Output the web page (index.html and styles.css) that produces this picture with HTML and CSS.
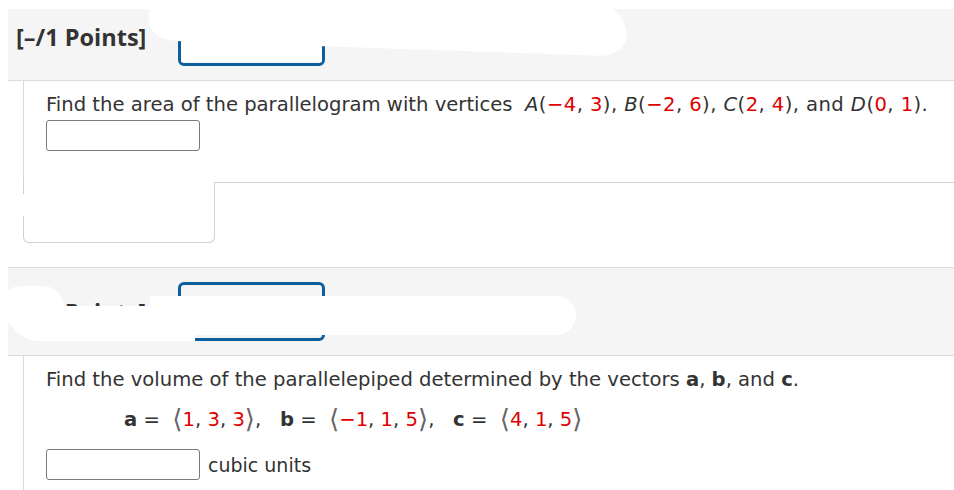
FILE: index.html
```html
<!DOCTYPE html>
<html>
<head>
<meta charset="utf-8">
<link rel="stylesheet" href="styles.css">
</head>
<body>
<div class="page">
  <div class="clip">
    <div class="q-head first">
      <span class="points">[–/1 Points]</span>
      <span class="btn"></span>
    </div>
  </div>
  <div class="q-body">
    <p class="q-text">Find the area of the parallelogram with vertices&nbsp; <span class="math"><i>A</i>(<span class="r">−4</span>, <span class="r">3</span>), <i>B</i>(<span class="r">−2</span>, <span class="r">6</span>), <i>C</i>(<span class="r">2</span>, <span class="r">4</span>), and <i>D</i>(<span class="r">0</span>, <span class="r">1</span>).</span></p>
    <div class="answer"><span class="field"></span></div>
  </div>
  <div class="tab-row">
    <div class="tab"></div>
    <div class="tab-line"></div>
  </div>
  <div class="q-head second">
    <span class="points">[–/1 Points]</span>
    <span class="btn"></span>
  </div>
  <div class="q-body second-body">
    <p class="q-text">Find the volume of the parallelepiped determined by the vectors <b>a</b>, <b>b</b>, and <b>c</b>.</p>
    <p class="vectors"><b>a</b> = &nbsp;<span class="ang">⟨</span><span class="r">1</span>, <span class="r">3</span>, <span class="r">3</span><span class="ang">⟩</span>, &nbsp; <b>b</b> = &nbsp;<span class="ang">⟨</span><span class="r">−1</span>, <span class="r">1</span>, <span class="r">5</span><span class="ang">⟩</span>, &nbsp; <b>c</b> = &nbsp;<span class="ang">⟨</span><span class="r">4</span>, <span class="r">1</span>, <span class="r">5</span><span class="ang">⟩</span></p>
    <div class="answer"><span class="field"></span><span class="unit">cubic units</span></div>
  </div>
  <span class="blob b1"></span>
  <span class="blob b2"></span>
  <span class="blob b3"></span>
  <span class="blob b4"></span>
  <span class="blob b5"></span>
  <span class="blob b6"></span>
</div>
</body>
</html>
```
FILE: styles.css
```css
html, body { margin: 0; padding: 0; background: #fff; }
body { padding: 9px 0 0 8px; overflow: hidden; }
.page { position: relative; font-family: "DejaVu Sans", Verdana, sans-serif; color: #333; }

.clip { height: 72px; overflow: hidden; }
.q-head {
  display: flex; align-items: center;
  height: 89px; box-sizing: border-box;
  background: #f5f5f5;
  border-top: 1px solid #dcdcdc; border-bottom: 1px solid #dcdcdc;
  padding-left: 8px;
}
.q-head.first { margin-top: -17px; }
.points {
  width: 162px;
  font-family: "Open Sans", sans-serif; font-weight: 700; font-size: 23.5px;
  color: #333;
}
.btn {
  width: 147px; height: 59px; box-sizing: border-box;
  border: 3px solid #0b609b; border-radius: 6px;
}

.q-body {
  margin-left: 15px; border-left: 1px solid #d9d9d9;
  padding: 12px 0 0 22px;
  height: 101px; box-sizing: border-box;
}
.q-text { margin: 0; font-size: 19.6px; line-height: 24px; white-space: nowrap; }
.q-text i { font-style: italic; }
.math { letter-spacing: 0.42px; }
.r { color: #e00000; }
.answer { display: flex; align-items: center; gap: 8px; margin-top: 3px; }
.field {
  width: 154px; height: 31px; box-sizing: border-box;
  border: 1px solid #7a7a7a; border-radius: 3px; background: #fff;
}
.unit { font-size: 19px; }

.tab-row { display: flex; height: 61px; margin-left: 15px; }
.tab {
  width: 192px; box-sizing: border-box;
  border: 1px solid #d0d0d0; border-top: none;
  border-radius: 0 0 6px 6px;
}
.tab-line { flex: 1; border-top: 1px solid #d0d0d0; }

.q-head.second { margin-top: 24px; }
.second-body { height: 140px; }
.vectors { margin: 14px 0 0 78px; font-size: 19.6px; line-height: 26px; white-space: nowrap; }
.vectors b { font-weight: 700; }
.ang { color: #666; font-size: 26px; vertical-align: -2px; }
.second-body .answer { margin-top: 16px; }

.blob { position: absolute; background: #fff; }
.b1 {
  left: 140px; top: -20px; width: 478px; height: 51px;
  border-radius: 0 30px 26px 28px / 0 30px 20px 20px;
  transform: rotate(2deg); transform-origin: left bottom;
}
.b2 { left: 173px; top: 20px; width: 141px; height: 33px; }
.b3 { left: 142px; top: 287px; width: 426px; height: 39px; border-radius: 0 20px 20px 0; }
.b4 { left: 0; top: 297px; width: 187px; height: 35px; border-radius: 0 0 0 30px; }
.b5 { left: -8px; top: 277px; width: 64px; height: 42px; border-radius: 21px; }
.b6 { left: 12px; top: 185px; width: 6px; height: 22px; }
```
